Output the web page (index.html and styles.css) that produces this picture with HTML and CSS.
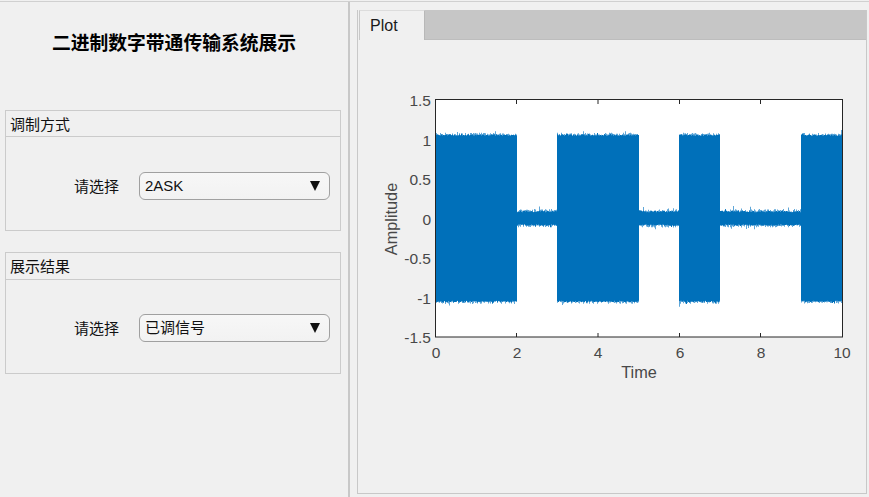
FILE: index.html
```html
<!DOCTYPE html>
<html lang="zh">
<head>
<meta charset="utf-8">
<title>二进制数字带通传输系统展示</title>
<link rel="stylesheet" href="styles.css">
</head>
<body>
<div class="app">
  <aside class="side">
    <h1 class="title">二进制数字带通传输系统展示</h1>
    <section class="group">
      <h2 class="group-head">调制方式</h2>
      <div class="group-body">
        <span class="field-label">请选择</span>
        <div class="dropdown"><span class="dropdown-value">2ASK</span><span class="caret"></span></div>
      </div>
    </section>
    <section class="group group-result">
      <h2 class="group-head">展示结果</h2>
      <div class="group-body">
        <span class="field-label">请选择</span>
        <div class="dropdown"><span class="dropdown-value">已调信号</span><span class="caret"></span></div>
      </div>
    </section>
  </aside>
  <main class="main">
    <div class="tabs">
      <div class="tab-strip"><div class="tab">Plot</div><div class="tab-fill"></div></div>
      <div class="tab-content">
        <svg class="chart" viewBox="358 40 508 453" width="508" height="453" role="img" aria-label="Amplitude vs Time">
          <defs><clipPath id="plot-area"><rect x="436" y="100" width="407" height="237"/></clipPath></defs>
          <rect class="plot-bg" x="436" y="100" width="407" height="237"/>
          <g clip-path="url(#plot-area)">
            <path id="wave-fringe" class="wave-fringe"/>
            <path id="wave-core" class="wave-core"/>
          </g>
          <path class="ticks" d="M516.5 100V104M598 100V104M679.5 100V104M760.5 100V104M516.5 337V333M598 337V333M679.5 337V333M760.5 337V333"/>
          <rect class="axes-box" x="435.5" y="99.5" width="407" height="237.5"/>
          <g class="y-ticks">
            <text x="431" y="106">1.5</text>
            <text x="431" y="145.500">1</text>
            <text x="431" y="185">0.5</text>
            <text x="431" y="224.500">0</text>
            <text x="431" y="264">-0.5</text>
            <text x="431" y="303.500">-1</text>
            <text x="431" y="343">-1.5</text>
          </g>
          <g class="x-ticks">
            <text x="436" y="357.500">0</text>
            <text x="517" y="357.500">2</text>
            <text x="598" y="357.500">4</text>
            <text x="680" y="357.500">6</text>
            <text x="761" y="357.500">8</text>
            <text x="842" y="357.500">10</text>
          </g>
          <text class="x-label" x="639" y="378">Time</text>
          <text class="y-label" transform="translate(397 219) rotate(-90)">Amplitude</text>
        </svg>
      </div>
    </div>
  </main>
</div>
<script src="chart.js"></script>
</body>
</html>
```
FILE: styles.css
```css
* { box-sizing: border-box; }
html, body { margin: 0; padding: 0; height: 100%; }
body {
  background: #f0f0f0;
  overflow: hidden;
  font-family: "Liberation Sans", "Noto Sans CJK SC", sans-serif;
  color: #111;
}
.app {
  display: flex;
  width: 869px;
  height: 497px;
  margin-top: 1px;
  border-top: 1px solid #d0d0d0;
}
.side {
  flex: 0 0 350px;
  border-right: 2px solid #c8c8c8;
  padding: 0 7px 0 5px;
}
.title {
  height: 108px;
  margin: 0;
  padding: 27px 0 0 2px;
  font-size: 18.8px;
  line-height: 26px;
  font-weight: 700;
  text-align: center;
  color: #000;
  font-family: "Noto Sans CJK SC", sans-serif;
}
.group {
  height: 121px;
  border: 1px solid #cbcbcb;
  margin-bottom: 21px;
}
.group-head {
  height: 26px;
  margin: 0;
  padding-left: 4px;
  border-bottom: 1px solid #cbcbcb;
  font-size: 15px;
  font-weight: 400;
  line-height: 26px;
  font-family: "Noto Sans CJK SC", sans-serif;
}
.group-body {
  display: flex;
  justify-content: flex-end;
  align-items: center;
  gap: 20px;
  padding: 35px 10px 0 0;
}
.group-result { height: 122px; }
.group-result .group-head { height: 27px; }
.group-result .group-body { padding-top: 34px; }
.field-label {
  font-size: 15px;
  line-height: 28px;
  font-family: "Noto Sans CJK SC", sans-serif;
}
.dropdown {
  flex: 0 0 191px;
  height: 28px;
  display: flex;
  align-items: center;
  justify-content: space-between;
  padding: 0 9px 0 5px;
  border: 1px solid #a0a0a0;
  border-radius: 6px;
  background: linear-gradient(#f7f7f7, #f2f2f2);
}
.dropdown-value { font-size: 15px; line-height: 26px; }
.caret {
  width: 0;
  height: 0;
  margin-top: -1px;
  border-left: 5px solid transparent;
  border-right: 5px solid transparent;
  border-top: 10px solid #111;
}
.main {
  flex: 1;
  padding: 8px 2px 0 7px;
}
.tabs {
  width: 510px;
  height: 484px;
  border: 1px solid #c8c8c8;
  border-top: 0;
  display: flex;
  flex-direction: column;
}
.tab-strip {
  display: flex;
  height: 30px;
  padding-left: 1px;
}
.tab {
  width: 66px;
  height: 30px;
  padding-left: 10px;
  border-left: 1px solid #c8c8c8;
  border-right: 1px solid #b8b8b8;
  border-top: 1px solid #dcdcdc;
  background: #f0f0f0;
  font-size: 16px;
  line-height: 29px;
  color: #1a1a1a;
}
.tab-fill {
  flex: 1;
  height: 30px;
  background: #c6c6c6;
  border-bottom: 1px solid #bdbdbd;
}
.tab-content { flex: 1; }
.chart {
  display: block;
  font-family: "Liberation Sans", sans-serif;
  fill: #484848;
}
.plot-bg { fill: #fff; }
.wave-core { fill: #0070ba; }
.wave-fringe { fill: #5ea6d8; }
.ticks { stroke: #262626; stroke-width: 1; fill: none; }
.axes-box { fill: none; stroke: #262626; stroke-width: 1; }
.y-ticks text { font-size: 15.5px; text-anchor: end; }
.x-ticks text { font-size: 15.5px; text-anchor: middle; }
.x-label, .y-label { font-size: 16.3px; text-anchor: middle; }
```
FILE: chart.js
```js
// Draws the noisy 2ASK envelope; seeded so that every render is identical.
(function () {
  var seed = 20240611;
  function rnd() {
    seed = (seed * 1664525 + 1013904223) >>> 0;
    return seed / 4294967296;
  }
  var X0 = 436, PX_PER_UNIT = 40.6, MID = 218.3;
  var HIGH = [[0, 2], [3, 5], [6, 7], [9, 10.1]];

  function isHigh(t) {
    return HIGH.some(function (s) { return t >= s[0] && t < s[1]; });
  }
  function noise(scale) {
    var r = rnd();
    var spike = r > 0.95 ? 2 : 1;
    return rnd() * scale * spike;
  }
  function envelope(base, scale) {
    var top = [], bottom = [];
    for (var x = 0; x < 407; x++) {
      var amp = isHigh((x + 0.8) / PX_PER_UNIT) ? base[0] : base[1];
      top.push(MID - amp - noise(scale));
      bottom.push(MID + amp + noise(scale));
    }
    var d = "M" + X0 + " " + top[0].toFixed(1);
    for (var i = 0; i < 407; i++) {
      d += "H" + (X0 + i + 1) + "V" + (i < 406 ? top[i + 1] : bottom[406]).toFixed(1);
    }
    for (var j = 406; j >= 0; j--) {
      d += "V" + bottom[j].toFixed(1) + "H" + (X0 + j);
    }
    return d + "Z";
  }
  document.getElementById("wave-fringe").setAttribute("d", envelope([82.6, 6.2], 3));
  document.getElementById("wave-core").setAttribute("d", envelope([82.4, 6], 1.6));
})();
```
